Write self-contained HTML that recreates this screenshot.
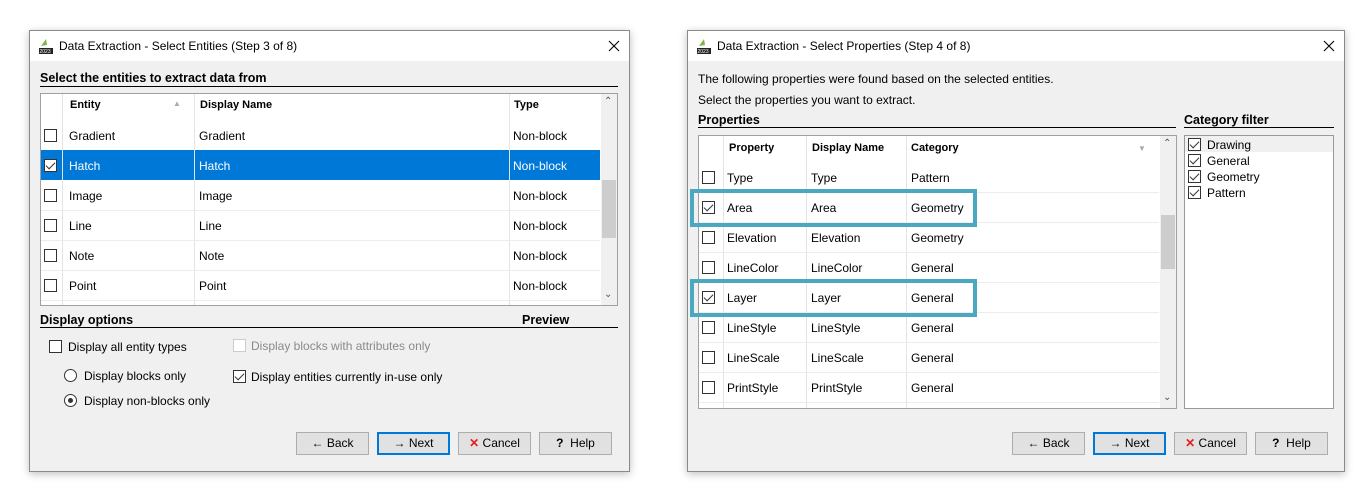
<!DOCTYPE html>
<html><head><style>
*{box-sizing:border-box;margin:0;padding:0}
body{width:1371px;height:500px;background:#fff;position:relative;font-family:"Liberation Sans",sans-serif;font-size:12px;color:#000;overflow:hidden}
.a{position:absolute}
.dlg{position:absolute;background:#f0f0f0;border:1px solid #8a8a8a;box-shadow:0 2px 8px rgba(0,0,0,.25)}
.tb{position:absolute;left:0;top:0;right:0;height:30px;background:#fff}
.t{position:absolute;white-space:nowrap;line-height:14px}
.b{font-weight:bold}
.hl{position:absolute;height:1px;background:#000}
.box{position:absolute;background:#fff;border:1px solid #a0a0a0}
.cb{position:absolute;width:13px;height:13px;border:1px solid #333;background:#fff}
.ck::after{content:"";position:absolute;left:3px;top:0px;width:4px;height:8px;border:solid #333;border-width:0 1.3px 1.3px 0;transform:rotate(45deg)}
.vl{position:absolute;width:1px;background:#e4e4e4}
.rl{position:absolute;height:1px;background:#ececec}
.btn{position:absolute;width:73px;height:23px;background:#e1e1e1;border:1px solid #adadad;text-align:center;line-height:21px;white-space:nowrap}
.nx{border:2px solid #0078d7;line-height:19px}
.teal{position:absolute;border:4px solid #4aa8c0}
.rd{position:absolute;width:13px;height:13px;border:1px solid #333;border-radius:50%;background:#fff}
.icon{position:absolute;width:16px;height:16px}
.x{position:absolute;width:12px;height:12px}
</style></head><body>

<!-- LEFT DIALOG -->
<div class="dlg" style="left:29px;top:30px;width:601px;height:442px">
 <div class="tb"></div>
 <svg class="icon" style="left:8px;top:7px" viewBox="0 0 16 16"><path d="M3 8 L8 1 L9 7 Z" fill="#7ab648"/><rect x="1" y="10" width="14" height="6" fill="#222"/><text x="1.5" y="15" font-size="5" fill="#fff" font-family="Liberation Sans">2023</text></svg>
 <div class="t" style="left:29px;top:8px">Data Extraction - Select Entities (Step 3 of 8)</div>
 <svg class="x" style="left:578px;top:9px" viewBox="0 0 12 12"><path d="M1 1L11 11M11 1L1 11" stroke="#000" stroke-width="1.1"/></svg>
</div>
<div class="t b" style="left:40px;top:71px;font-size:12.5px">Select the entities to extract data from</div>
<div class="hl" style="left:40px;top:86px;width:578px"></div>
<div class="box" style="left:40px;top:93px;width:578px;height:213px"></div>
<div class="a" style="left:41px;top:150px;width:559px;height:30px;background:#0078d7"></div>
<div class="vl" style="left:62px;top:94px;height:211px"></div>
<div class="vl" style="left:194px;top:94px;height:211px"></div>
<div class="vl" style="left:509px;top:94px;height:211px"></div>
<div class="rl" style="left:41px;top:240px;width:559px"></div>
<div class="rl" style="left:41px;top:270px;width:559px"></div>
<div class="rl" style="left:41px;top:210px;width:559px"></div>
<div class="rl" style="left:41px;top:300px;width:559px"></div>
<div class="a" style="left:601px;top:94px;width:16px;height:211px;background:#f0f0f0"></div>
<div class="a" style="left:602px;top:180px;width:14px;height:58px;background:#cdcdcd"></div>
<div class="t" style="left:604px;top:95px;font-size:10px;color:#555">&#8963;</div>
<div class="t" style="left:604px;top:288px;font-size:10px;color:#555">&#8964;</div>
<div class="t b" style="left:70px;top:98px;font-size:11px">Entity</div>
<div class="t" style="left:173px;top:97px;font-size:8px;color:#aaa">▲</div>
<div class="t b" style="left:200px;top:98px;font-size:11px">Display Name</div>
<div class="t b" style="left:514px;top:98px;font-size:11px">Type</div>
<div class="cb" style="left:44px;top:129px"></div>
<div class="t" style="left:69px;top:129px">Gradient</div><div class="t" style="left:199px;top:129px">Gradient</div><div class="t" style="left:513px;top:129px">Non-block</div>
<div class="cb ck" style="left:44px;top:159px"></div>
<div class="t" style="left:69px;top:159px;color:#fff">Hatch</div><div class="t" style="left:199px;top:159px;color:#fff">Hatch</div><div class="t" style="left:513px;top:159px;color:#fff">Non-block</div>
<div class="cb" style="left:44px;top:189px"></div>
<div class="t" style="left:69px;top:189px">Image</div><div class="t" style="left:199px;top:189px">Image</div><div class="t" style="left:513px;top:189px">Non-block</div>
<div class="cb" style="left:44px;top:219px"></div>
<div class="t" style="left:69px;top:219px">Line</div><div class="t" style="left:199px;top:219px">Line</div><div class="t" style="left:513px;top:219px">Non-block</div>
<div class="cb" style="left:44px;top:249px"></div>
<div class="t" style="left:69px;top:249px">Note</div><div class="t" style="left:199px;top:249px">Note</div><div class="t" style="left:513px;top:249px">Non-block</div>
<div class="cb" style="left:44px;top:279px"></div>
<div class="t" style="left:69px;top:279px">Point</div><div class="t" style="left:199px;top:279px">Point</div><div class="t" style="left:513px;top:279px">Non-block</div>

<div class="t b" style="left:40px;top:313px;font-size:12.5px">Display options</div>
<div class="t b" style="left:522px;top:313px;font-size:12.5px">Preview</div>
<div class="hl" style="left:40px;top:327px;width:578px"></div>
<div class="cb" style="left:49px;top:340px"></div>
<div class="t" style="left:68px;top:340px">Display all entity types</div>
<div class="cb" style="left:233px;top:339px;border-color:#ccc"></div>
<div class="t" style="left:251px;top:339px;color:#8a8a8a">Display blocks with attributes only</div>
<div class="rd" style="left:64px;top:369px"></div>
<div class="t" style="left:84px;top:369px">Display blocks only</div>
<div class="cb ck" style="left:233px;top:370px"></div>
<div class="t" style="left:251px;top:370px">Display entities currently in-use only</div>
<div class="rd" style="left:64px;top:394px"></div><div class="a" style="left:68px;top:398px;width:5px;height:5px;border-radius:50%;background:#333"></div>
<div class="t" style="left:84px;top:394px">Display non-blocks only</div>
<div class="btn" style="left:296px;top:432px">&#8592; Back</div>
<div class="btn nx" style="left:377px;top:432px">&#8594; Next</div>
<div class="btn" style="left:458px;top:432px"><span style="color:#e02020;font-weight:bold">✕</span> Cancel</div>
<div class="btn" style="left:539px;top:432px"><b>?</b>&nbsp; Help</div>

<!-- RIGHT DIALOG -->
<div class="dlg" style="left:687px;top:30px;width:658px;height:442px">
 <div class="tb"></div>
 <svg class="icon" style="left:8px;top:7px" viewBox="0 0 16 16"><path d="M3 8 L8 1 L9 7 Z" fill="#7ab648"/><rect x="1" y="10" width="14" height="6" fill="#222"/><text x="1.5" y="15" font-size="5" fill="#fff" font-family="Liberation Sans">2023</text></svg>
 <div class="t" style="left:29px;top:8px">Data Extraction - Select Properties (Step 4 of 8)</div>
 <svg class="x" style="left:635px;top:9px" viewBox="0 0 12 12"><path d="M1 1L11 11M11 1L1 11" stroke="#000" stroke-width="1.1"/></svg>
</div>
<div class="t" style="left:698px;top:72px">The following properties were found based on the selected entities.</div>
<div class="t" style="left:698px;top:93px">Select the properties you want to extract.</div>
<div class="t b" style="left:698px;top:113px;font-size:12.5px">Properties</div>
<div class="hl" style="left:698px;top:127px;width:478px"></div>
<div class="t b" style="left:1184px;top:113px;font-size:12.5px">Category filter</div>
<div class="hl" style="left:1184px;top:127px;width:150px"></div>
<div class="box" style="left:698px;top:135px;width:479px;height:274px"></div>
<div class="vl" style="left:723px;top:136px;height:272px"></div>
<div class="vl" style="left:806px;top:136px;height:272px"></div>
<div class="vl" style="left:906px;top:136px;height:272px"></div>
<div class="rl" style="left:699px;top:192px;width:460px"></div>
<div class="rl" style="left:699px;top:222px;width:460px"></div>
<div class="rl" style="left:699px;top:252px;width:460px"></div>
<div class="rl" style="left:699px;top:282px;width:460px"></div>
<div class="rl" style="left:699px;top:312px;width:460px"></div>
<div class="rl" style="left:699px;top:342px;width:460px"></div>
<div class="rl" style="left:699px;top:372px;width:460px"></div>
<div class="rl" style="left:699px;top:402px;width:460px"></div>
<div class="a" style="left:1160px;top:136px;width:16px;height:272px;background:#f0f0f0"></div>
<div class="a" style="left:1161px;top:215px;width:14px;height:54px;background:#cdcdcd"></div>
<div class="t" style="left:1163px;top:137px;font-size:10px;color:#555">&#8963;</div>
<div class="t" style="left:1163px;top:391px;font-size:10px;color:#555">&#8964;</div>
<div class="t b" style="left:729px;top:141px;font-size:11px">Property</div>
<div class="t b" style="left:812px;top:141px;font-size:11px">Display Name</div>
<div class="t b" style="left:911px;top:141px;font-size:11px">Category</div>
<div class="t" style="left:1138px;top:142px;font-size:8px;color:#aaa">▼</div>

<div class="cb" style="left:702px;top:171px"></div><div class="t" style="left:727px;top:171px">Type</div><div class="t" style="left:811px;top:171px">Type</div><div class="t" style="left:911px;top:171px">Pattern</div>
<div class="cb ck" style="left:702px;top:201px"></div><div class="t" style="left:727px;top:201px">Area</div><div class="t" style="left:811px;top:201px">Area</div><div class="t" style="left:911px;top:201px">Geometry</div>
<div class="cb" style="left:702px;top:231px"></div><div class="t" style="left:727px;top:231px">Elevation</div><div class="t" style="left:811px;top:231px">Elevation</div><div class="t" style="left:911px;top:231px">Geometry</div>
<div class="cb" style="left:702px;top:261px"></div><div class="t" style="left:727px;top:261px">LineColor</div><div class="t" style="left:811px;top:261px">LineColor</div><div class="t" style="left:911px;top:261px">General</div>
<div class="cb ck" style="left:702px;top:291px"></div><div class="t" style="left:727px;top:291px">Layer</div><div class="t" style="left:811px;top:291px">Layer</div><div class="t" style="left:911px;top:291px">General</div>
<div class="cb" style="left:702px;top:321px"></div><div class="t" style="left:727px;top:321px">LineStyle</div><div class="t" style="left:811px;top:321px">LineStyle</div><div class="t" style="left:911px;top:321px">General</div>
<div class="cb" style="left:702px;top:351px"></div><div class="t" style="left:727px;top:351px">LineScale</div><div class="t" style="left:811px;top:351px">LineScale</div><div class="t" style="left:911px;top:351px">General</div>
<div class="cb" style="left:702px;top:381px"></div><div class="t" style="left:727px;top:381px">PrintStyle</div><div class="t" style="left:811px;top:381px">PrintStyle</div><div class="t" style="left:911px;top:381px">General</div>
<div class="teal" style="left:690px;top:189px;width:287px;height:38px"></div>
<div class="teal" style="left:690px;top:279px;width:287px;height:38px"></div>

<div class="box" style="left:1184px;top:135px;width:150px;height:274px;border-color:#999"></div>
<div class="a" style="left:1185px;top:136px;width:148px;height:16px;background:#f0f0f0"></div>
<div class="cb ck" style="left:1188px;top:138px"></div><div class="t" style="left:1207px;top:138px">Drawing</div>
<div class="cb ck" style="left:1188px;top:154px"></div><div class="t" style="left:1207px;top:154px">General</div>
<div class="cb ck" style="left:1188px;top:170px"></div><div class="t" style="left:1207px;top:170px">Geometry</div>
<div class="cb ck" style="left:1188px;top:186px"></div><div class="t" style="left:1207px;top:186px">Pattern</div>

<div class="btn" style="left:1012px;top:432px">&#8592; Back</div>
<div class="btn nx" style="left:1093px;top:432px">&#8594; Next</div>
<div class="btn" style="left:1174px;top:432px"><span style="color:#e02020;font-weight:bold">✕</span> Cancel</div>
<div class="btn" style="left:1255px;top:432px"><b>?</b>&nbsp; Help</div>
</body></html>
